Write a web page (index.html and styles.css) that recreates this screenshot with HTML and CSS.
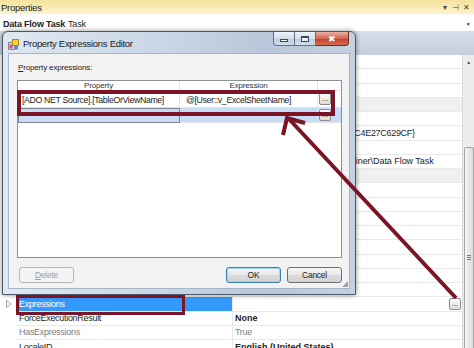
FILE: index.html
```html
<!DOCTYPE html>
<html lang="en">
<head>
  <meta charset="UTF-8">
  <title>Properties - Property Expressions Editor</title>
  <link rel="stylesheet" href="styles.css">
</head>
<body>

  <div class="props">
    <div class="props-title">
      <span>Properties</span>
      <span class="title-tools"><span>&#9662;</span><span>&#8867;</span><span>&#10005;</span></span>
    </div>
    <div class="props-object"><b>Data Flow Task</b> Task <span class="drop">&#9660;</span></div>
    <div class="props-toolbar"></div>

    <div class="props-body">
      <div class="props-grid">
        <!-- rows hidden behind the dialog are left without names -->
        <div class="prop-row"><span class="gut"></span><span class="name"></span><span class="value"></span></div>
        <div class="prop-row"><span class="gut"></span><span class="name"></span><span class="value"></span></div>
        <div class="prop-row"><span class="gut"></span><span class="name"></span><span class="value"></span></div>
        <div class="prop-row cat"><span class="gut"></span><span class="name"></span><span class="value"></span></div>
        <div class="prop-row"><span class="gut"></span><span class="name"></span><span class="value"></span></div>
        <div class="prop-row"><span class="gut"></span><span class="name"></span><span class="value">{8D2E58B1-35A4-4DF2-9F87-2C4E27C629CF}</span></div>
        <div class="prop-row"><span class="gut"></span><span class="name"></span><span class="value"></span></div>
        <div class="prop-row"><span class="gut"></span><span class="name"></span><span class="value path">\Package\Foreach Loop Container\Data Flow Task</span></div>
        <div class="prop-row cat"><span class="gut"></span><span class="name"></span><span class="value"></span></div>
        <div class="prop-row"><span class="gut"></span><span class="name"></span><span class="value"></span></div>
        <div class="prop-row"><span class="gut"></span><span class="name"></span><span class="value"></span></div>
        <div class="prop-row"><span class="gut"></span><span class="name"></span><span class="value"></span></div>
        <div class="prop-row"><span class="gut"></span><span class="name"></span><span class="value"></span></div>
        <div class="prop-row"><span class="gut"></span><span class="name"></span><span class="value"></span></div>
        <div class="prop-row"><span class="gut"></span><span class="name"></span><span class="value"></span></div>
        <div class="prop-row"><span class="gut"></span><span class="name"></span><span class="value"></span></div>
        <div class="prop-row"><span class="gut"></span><span class="name"></span><span class="value"></span></div>
        <div class="prop-row">
          <span class="gut">
            <svg width="6" height="8" viewBox="0 0 6 8"><polygon points="0.5,0.5 5,4 0.5,7.5" fill="#fff" stroke="#a6a6a6"/></svg>
          </span>
          <span class="name"><span class="sel">Expressions</span></span>
          <span class="value"><span class="dots dots-prop">...</span></span>
        </div>
        <div class="prop-row"><span class="gut"></span><span class="name">ForceExecutionResult</span><span class="value"><b>None</b></span></div>
        <div class="prop-row dim"><span class="gut"></span><span class="name">HasExpressions</span><span class="value">True</span></div>
        <div class="prop-row"><span class="gut"></span><span class="name">LocaleID</span><span class="value"><b>English (United States)</b></span></div>
      </div>
      <div class="scrollbar">
        <div class="sb-up">&#9650;</div>
        <div class="sb-thumb"><div class="sb-grip"></div></div>
      </div>
    </div>
  </div>

  <div class="dialog">
    <div class="dlg-caption">
      <svg class="dlg-icon" width="11" height="11" viewBox="0 0 11 11">
        <rect x="0.5" y="3.5" width="6" height="7" fill="#d9d9d9" stroke="#8a8a8a"/>
        <rect x="1.5" y="5.5" width="3" height="4" fill="#e0506a"/>
        <rect x="4.5" y="0.5" width="6" height="6" fill="#f5d23c" stroke="#b08a10"/>
        <rect x="6" y="7" width="4" height="3.5" fill="#5a8fd8"/>
      </svg>
      <span class="dlg-title">Property Expressions Editor</span>
      <div class="dlg-buttons">
        <span class="cap-btn cap-min"><i></i></span>
        <span class="cap-btn cap-max"><i></i></span>
        <span class="cap-btn cap-close">&#10006;</span>
      </div>
    </div>
    <div class="dlg-client">
      <div class="dlg-label"><u>P</u>roperty expressions:</div>
      <div class="expr-grid">
        <div class="eg-row eg-head">
          <span class="eg-cell c1">Property</span>
          <span class="eg-cell c2">Expression</span>
          <span class="eg-cell c3"></span>
        </div>
        <div class="eg-row eg-first">
          <span class="eg-cell c1">[ADO NET Source].[TableOrViewName]</span>
          <span class="eg-cell c2">@[User::v_ExcelSheetName]</span>
          <span class="eg-cell c3"><span class="dots">...</span></span>
        </div>
        <div class="eg-row eg-new">
          <span class="eg-cell c1 focus"></span>
          <span class="eg-cell c2"></span>
          <span class="eg-cell c3"><span class="dots">...</span></span>
        </div>
      </div>
      <div class="dlg-actions">
        <span class="btn disabled"><u>D</u>elete</span>
        <span class="btn default">OK</span>
        <span class="btn">Cancel</span>
      </div>
      <span class="grip"></span>
    </div>
  </div>

  <div class="mark mark-row"></div>
  <div class="mark mark-expr"></div>

  <svg class="arrow" width="474" height="348" viewBox="0 0 474 348">
    <line x1="456" y1="298" x2="289" y2="119" stroke="#7b1426" stroke-width="4"/>
    <polyline points="283,135 287,118 305,123" fill="none" stroke="#7b1426" stroke-width="4"/>
  </svg>

</body>
</html>
```

FILE: styles.css
```css
* {
  box-sizing: border-box;
}

body {
  margin: 0;
  width: 474px;
  height: 348px;
  overflow: hidden;
  position: relative;
  background: #fff;
  color: #1e1e1e;
  font-family: "Liberation Sans", Arial, sans-serif;
  font-size: 9px;
  letter-spacing: -0.3px;
}

/* properties tool window */

.props-title {
  height: 14px;
  display: flex;
  align-items: center;
  justify-content: space-between;
  padding: 0 4px 0 1px;
  background: linear-gradient(#f6e29c, #fdf3cb);
  font-size: 9.5px;
  letter-spacing: -0.25px;
}

.title-tools {
  display: flex;
  gap: 5px;
  font-size: 8px;
  color: #444;
}

.props-object {
  height: 17px;
  display: flex;
  align-items: center;
  padding: 2px 0 0 3px;
  letter-spacing: -0.2px;
}

.props-object b {
  margin-right: 3px;
}

.drop {
  margin-left: auto;
  width: 12px;
  text-align: center;
  font-size: 5px;
  color: #333;
}

.props-toolbar {
  height: 24px;
  background: linear-gradient(#d6dee8, #c4cfdc);
}

.props-body {
  display: flex;
  height: 293px;
}

.props-grid {
  flex: 1;
}

.prop-row {
  display: grid;
  grid-template-columns: 17px 215px 1fr;
  height: 14.25px;
}

.prop-row .gut {
  display: flex;
  align-items: center;
  padding-left: 6px;
}

.prop-row .name,
.prop-row .value {
  display: flex;
  align-items: center;
  overflow: hidden;
  white-space: nowrap;
  border-bottom: 1px solid #e9e9e9;
}

.prop-row .name {
  padding-left: 2px;
}

.prop-row .value {
  padding-left: 2px;
  border-left: 1px solid #e9e9e9;
}

.prop-row .value.path {
  letter-spacing: -0.05px;
}

.prop-row .value b {
  letter-spacing: 0;
}

.prop-row.cat .name,
.prop-row.cat .value {
  background: #f0f0f0;
}

.prop-row.dim {
  color: #808080;
}

.sel {
  display: flex;
  align-items: center;
  width: 100%;
  height: 100%;
  background: #3399ff;
  color: #fff;
}

.dots {
  width: 12px;
  height: 12px;
  display: flex;
  align-items: flex-end;
  justify-content: center;
  padding-bottom: 2px;
  border: 1px solid #8d8d8d;
  border-radius: 2px;
  background: linear-gradient(#fafafa, #dedede);
  font-size: 8px;
  line-height: 6px;
  letter-spacing: 0;
  color: #222;
}

.dots-prop {
  margin-left: auto;
  margin-right: 1px;
}

.scrollbar {
  width: 12px;
  display: flex;
  flex-direction: column;
  background: #ececec;
  border-left: 1px solid #dadada;
}

.sb-up {
  height: 14px;
  text-align: center;
  font-size: 5px;
  line-height: 14px;
  color: #555;
}

.sb-thumb {
  flex: 1;
  margin: 78px 0 0 1px;
  border: 1px solid #a3a3a3;
  border-bottom: 0;
  border-radius: 2px 2px 0 0;
  background: linear-gradient(to right, #f4f4f4, #dcdcdc);
}

.sb-grip {
  width: 4px;
  height: 5px;
  margin: 107px auto 0;
  border-top: 1px solid #777;
  border-bottom: 1px solid #777;
  position: relative;
}

.sb-grip::after {
  content: "";
  position: absolute;
  left: 0;
  right: 0;
  top: 1px;
  border-top: 1px solid #777;
}

/* the dialog floating over the tool window */

.dialog {
  position: absolute;
  left: 2px;
  top: 31px;
  width: 354px;
  height: 264px;
  display: flex;
  flex-direction: column;
  padding: 0 5px 5px;
  border: 1px solid #4c5868;
  border-radius: 6px 6px 0 0;
  background: linear-gradient(to right, #dfe8f2, #c9d6e5 45%, #b8c7d9 75%, #c3d1e1);
  box-shadow: 0 0 5px rgba(0, 0, 0, 0.45);
}

.dlg-caption {
  height: 21px;
  display: flex;
  align-items: center;
  position: relative;
}

.dlg-icon {
  margin: 3px 4px 0 0;
}

.dlg-title {
  padding-top: 1px;
  font-size: 9.5px;
  color: #1a1a1a;
}

.dlg-buttons {
  position: absolute;
  top: 0;
  right: 1px;
  display: flex;
}

.cap-btn {
  height: 14px;
  display: flex;
  align-items: center;
  justify-content: center;
  border: 1px solid #5f7188;
  border-top: 0;
  background: linear-gradient(#eef3f8, #d3dee9 50%, #bccbdc 51%, #d4dfea);
}

.cap-min {
  width: 22px;
  border-radius: 0 0 0 4px;
}

.cap-min i {
  width: 8px;
  height: 3px;
  margin-top: 4px;
  border: 1px solid #3b4a5c;
  background: #fff;
}

.cap-max {
  width: 21px;
  border-left: 0;
}

.cap-max i {
  width: 8px;
  height: 6px;
  border: 1px solid #3b4a5c;
  border-top-width: 2px;
  background: #e9eef4;
}

.cap-close {
  width: 33px;
  border-left: 0;
  border-color: #6a2a22;
  border-radius: 0 0 4px 0;
  background: linear-gradient(#eab0a4, #d4644f 50%, #c0412b 51%, #d66b52);
  color: #fff;
  font-size: 9px;
  letter-spacing: 0;
}

.dlg-client {
  flex: 1;
  position: relative;
  display: flex;
  flex-direction: column;
  padding: 8px 7px 5px 8px;
  border: 1px solid #a6b6c9;
  background: #f2f2f2;
}

.dlg-label {
  height: 12px;
  padding-left: 1px;
  line-height: 12px;
  font-size: 8px;
  letter-spacing: -0.15px;
  color: #222;
}

.expr-grid {
  height: 178px;
  margin-top: 6px;
  border: 1px solid #8c9196;
  background: #fff;
  font-size: 8.75px;
  letter-spacing: -0.35px;
}

.eg-row {
  display: grid;
  grid-template-columns: 162px 138px 1fr;
}

.eg-cell {
  display: flex;
  align-items: center;
  overflow: hidden;
  white-space: nowrap;
  border-right: 1px solid #e2e2e2;
  border-bottom: 1px solid #e2e2e2;
}

.eg-cell.c3 {
  border-right: 0;
  padding-left: 1px;
}

.eg-head {
  height: 10px;
  line-height: 10px;
  font-size: 8px;
  letter-spacing: -0.15px;
  color: #333;
}

.eg-head .eg-cell {
  justify-content: center;
  padding-top: 1px;
}

.eg-first {
  height: 17px;
}

.eg-first .c1 {
  padding: 2px 0 0 4px;
}

.eg-first .c2 {
  padding: 2px 0 0 6px;
}

.eg-new {
  height: 15px;
  background: #c8ddf5;
}

.eg-new .focus {
  border: 1px solid #7d8591;
}

.dlg-actions {
  display: flex;
  gap: 6px;
  margin-top: 9px;
  padding-left: 2px;
}

.btn {
  width: 55px;
  height: 16px;
  display: flex;
  align-items: center;
  justify-content: center;
  border: 1px solid #707070;
  border-radius: 3px;
  background: linear-gradient(#f4f4f4, #e9e9e9 50%, #dcdcdc 51%, #d2d2d2);
  font-size: 8.5px;
  letter-spacing: -0.25px;
}

.btn.disabled {
  margin-right: auto;
  border-color: #b8b8b8;
  background: #f4f4f4;
  color: #a0a0a0;
}

.btn.default {
  border-color: #3c7fb1;
  box-shadow: inset 0 0 0 1px #9fd6f5;
}

.grip {
  position: absolute;
  right: 1px;
  bottom: 1px;
  width: 6px;
  height: 6px;
  background: radial-gradient(circle, #a0a0a0 0.7px, transparent 1px) 0 0 / 2px 2px;
  clip-path: polygon(100% 0, 100% 100%, 0 100%);
}

/* annotations drawn over the screenshot */

.mark {
  position: absolute;
  border: 4px solid #7b1426;
}

.mark-row {
  left: 17px;
  top: 90px;
  width: 318px;
  height: 26px;
}

.mark-expr {
  left: 16px;
  top: 295px;
  width: 169px;
  height: 20px;
  border-width: 3px;
}

.arrow {
  position: absolute;
  left: 0;
  top: 0;
  pointer-events: none;
}
```
